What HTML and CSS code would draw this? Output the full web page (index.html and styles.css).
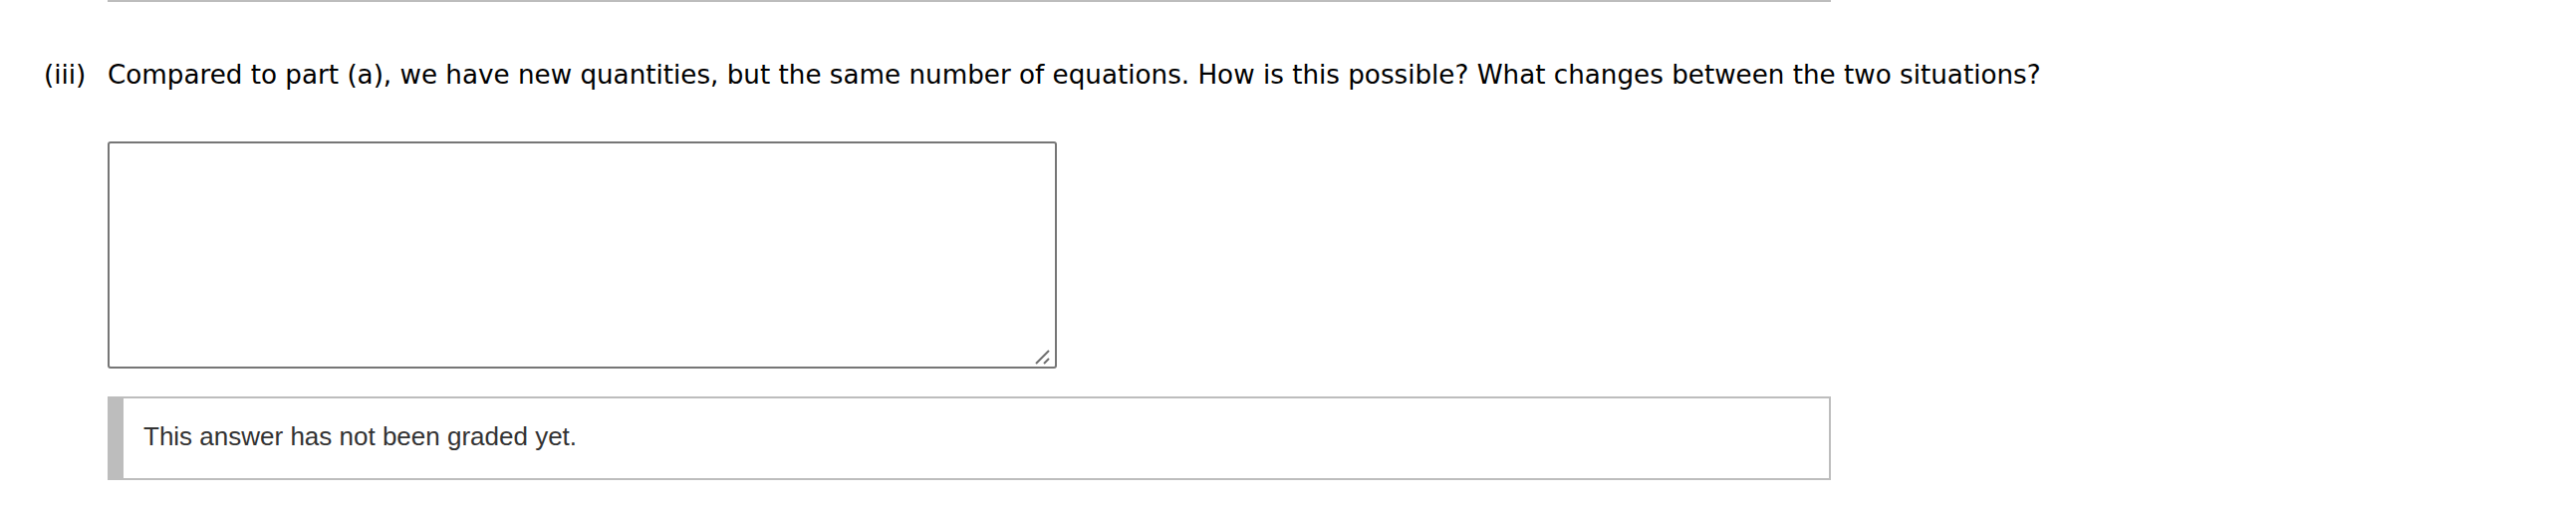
FILE: index.html
```html
<!DOCTYPE html>
<html>
<head>
<meta charset="utf-8">
<link rel="stylesheet" href="styles.css">
</head>
<body>
<div class="page">
  <div class="feedback feedback-prev"></div>
  <div class="question">
    <span class="qnum">(iii)</span>
    <span class="qtext">Compared to part (a), we have new quantities, but the same number of equations. How is this possible? What changes between the two situations?</span>
  </div>
  <div class="answer">
    <textarea class="answer-box"></textarea>
    <svg class="grip" width="20" height="20" viewBox="0 0 20 20">
      <line x1="2" y1="17" x2="15" y2="4" stroke="#6e6e6e" stroke-width="2"/>
      <line x1="10" y1="17" x2="15" y2="12" stroke="#6e6e6e" stroke-width="2"/>
    </svg>
  </div>
  <div class="feedback">This answer has not been graded yet.</div>
</div>
</body>
</html>
```
FILE: styles.css
```css
html, body {
  margin: 0;
  padding: 0;
  background: #ffffff;
}

.page {
  display: flex;
  flex-direction: column;
  align-items: flex-start;
}

.feedback {
  box-sizing: border-box;
  width: 1730px;
  height: 84px;
  margin-left: 108px;
  border: 2px solid #bdbdbd;
  border-left: 16px solid #bdbdbd;
  padding: 18px 20px 22px 20px;
  font-family: "Liberation Sans", Arial, sans-serif;
  font-size: 26px;
  line-height: 40px;
  color: #333333;
}

.feedback-prev {
  margin-top: -82px;
}

.question {
  display: flex;
  margin-top: 58px;
  font-family: "DejaVu Sans", Verdana, sans-serif;
  font-size: 26.2px;
  line-height: 30px;
  color: #000000;
}

.qnum {
  width: 64px;
  padding-left: 44px;
  flex-shrink: 0;
}

.qtext {
  white-space: nowrap;
}

.answer {
  position: relative;
  margin-top: 52px;
  margin-left: 108px;
  display: flex;
}

.answer-box {
  box-sizing: border-box;
  width: 953px;
  height: 228px;
  margin: 0;
  border: 2px solid #767676;
  border-radius: 3px;
  background: #ffffff;
  display: block;
  resize: none;
}

.grip {
  position: absolute;
  right: 3px;
  bottom: 2px;
  pointer-events: none;
}

.answer + .feedback {
  margin-top: 28px;
}
```
